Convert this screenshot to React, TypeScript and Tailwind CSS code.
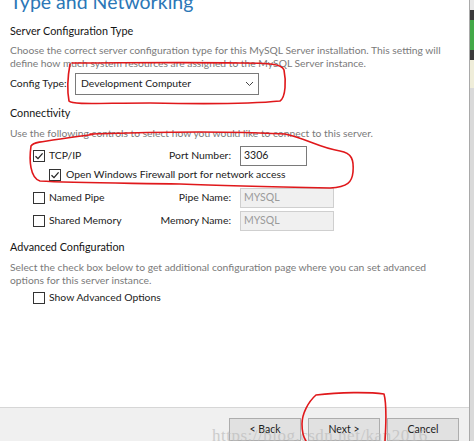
import React from "react";

const font = { fontFamily: 'Lato, "Noto Sans", Arial, sans-serif' };

function CheckBox({ checked }: { checked?: boolean }) {
  return (
    <div className="w-[12px] h-[12px] border border-[#333] bg-white flex items-center justify-center shrink-0">
      {checked && (
        <svg width="10" height="10" viewBox="0 0 10 10">
          <path d="M1.5 5.2 L4 7.6 L8.6 2.4" fill="none" stroke="#222" strokeWidth="1.3" />
        </svg>
      )}
    </div>
  );
}

function TextBox({ value, disabled, width }: { value: string; disabled?: boolean; width: string }) {
  return (
    <div
      className={
        "h-[20px] flex items-center px-[3px] text-[10.5px] border " +
        width +
        (disabled ? " bg-[#f0f0f0] border-[#cfcfcf] text-[#9a9a9a]" : " bg-white border-[#7a7a7a] text-[#222]")
      }
    >
      {value}
    </div>
  );
}

function Row({ label, checked, fieldLabel, value, disabled, width }: any) {
  return (
    <div className="h-[20px] flex items-center pl-[23px]">
      <div className="w-[117px] flex items-center gap-[4px]">
        <CheckBox checked={checked} />
        <span className="text-[10.4px] text-[#222]">{label}</span>
      </div>
      <div className="w-[81px] text-right text-[10.4px] text-[#222]">{fieldLabel}</div>
      <div className="ml-[9px]">
        <TextBox value={value} disabled={disabled} width={width} />
      </div>
    </div>
  );
}

function Button({ label }: { label: string }) {
  return (
    <div className="w-[72px] h-[23px] border border-[#adadad] bg-[#e1e1e1] flex items-center justify-center text-[10.5px] text-[#222]">
      {label}
    </div>
  );
}

export default function App() {
  return (
    <div className="relative w-[474px] h-[441px] overflow-hidden flex bg-white whitespace-nowrap" style={font}>
      <div className="w-[469px] h-full flex flex-col">
        <div className="flex-1 flex flex-col px-[10px]">
          <div className="h-[23px] relative">
            <div className="absolute left-0 top-[-10px] text-[19.5px] leading-[24px] text-[#2b77b7]">
              Type and Networking
            </div>
          </div>
          <div className="h-[16px] flex items-center text-[10.8px] text-[#141414]">
            Server Configuration Type
          </div>
          <div className="mt-[5px] text-[10.3px] leading-[12.5px] text-[#7a7a7a]">
            Choose the correct server configuration type for this MySQL Server installation. This setting will
            <br />
            define how much system resources are assigned to the MySQL Server instance.
          </div>
          <div className="mt-[4px] h-[22px] flex items-center">
            <span className="w-[65px] text-[10.4px] text-[#222]">Config Type:</span>
            <div className="w-[184px] h-[22px] border border-[#7a7a7a] bg-white flex items-center justify-between pl-[5px] pr-[4px]">
              <span className="text-[10.4px] text-[#222]">Development Computer</span>
              <svg width="9" height="6" viewBox="0 0 9 6">
                <path d="M1 1 L4.5 4.5 L8 1" fill="none" stroke="#444" strokeWidth="1" />
              </svg>
            </div>
          </div>
          <div className="mt-[10px] h-[16px] flex items-center text-[10.8px] text-[#141414]">
            Connectivity
          </div>
          <div className="mt-[6px] h-[13px] flex items-center text-[10.3px] text-[#7a7a7a]">
            Use the following controls to select how you would like to connect to this server.
          </div>
          <div className="mt-[6px]">
            <Row label="TCP/IP" checked fieldLabel="Port Number:" value="3306" width="w-[67px]" />
          </div>
          <div className="mt-[1px] h-[16px] flex items-center pl-[39px] gap-[5px]">
            <CheckBox checked />
            <span className="text-[10.4px] text-[#222]">Open Windows Firewall port for network access</span>
          </div>
          <div className="mt-[5px]">
            <Row label="Named Pipe" fieldLabel="Pipe Name:" value="MYSQL" disabled width="w-[94px]" />
          </div>
          <div className="mt-[3px]">
            <Row label="Shared Memory" fieldLabel="Memory Name:" value="MYSQL" disabled width="w-[94px]" />
          </div>
          <div className="mt-[8px] h-[16px] flex items-center text-[10.8px] text-[#141414]">
            Advanced Configuration
          </div>
          <div className="mt-[6px] text-[10.3px] leading-[13px] text-[#7a7a7a]">
            Select the check box below to get additional configuration page where you can set advanced
            <br />
            options for this server instance.
          </div>
          <div className="mt-[3px] h-[16px] flex items-center pl-[23px] gap-[4px]">
            <CheckBox />
            <span className="text-[10.4px] text-[#222]">Show Advanced Options</span>
          </div>
        </div>
        <div className="h-[34px] border-t border-[#d6d6d6] bg-[#f0f0f0] flex justify-end items-start pt-[10px] pr-[10px] gap-[7px]">
          <Button label="< Back" />
          <Button label="Next >" />
          <Button label="Cancel" />
        </div>
      </div>
      <div className="w-[1px] h-full bg-[#a9a9a9]" />
      <div className="flex-1 h-full flex flex-col bg-[#d9d9d9]">
        <div className="h-[10px] bg-[#e8e8e8]" />
        <div className="h-[50px] bg-[#3b3b3b] flex flex-col">
          <div className="h-[10px]" />
          <div className="h-[30px] bg-[#43a948]" />
        </div>
        <div className="h-[28px] bg-[#efedd9]" />
      </div>

      <div
        className="absolute left-[212px] top-[423px] text-[17px] tracking-[0.5px] text-[#bdbdbd] opacity-70 pointer-events-none"
        style={{ fontFamily: '"Liberation Serif", "DejaVu Serif", serif' }}
      >
        https://blog.csdn.net/kan2016
      </div>

      <svg className="absolute left-0 top-0 pointer-events-none" width="474" height="441" viewBox="0 0 474 441">
        <g fill="none" stroke="#e0181b" strokeWidth="1.6" strokeLinecap="round" strokeLinejoin="round">
          <path d="M70 64 C 68 75, 67 90, 69 101 C 72 105, 100 103, 150 103 C 200 104, 250 104, 280 101 C 286 97, 286 80, 284 70 C 282 64, 270 63, 240 63 C 180 62, 120 63, 72 63" />
          <path d="M90 134 C 150 132, 230 131, 285 134 C 305 138, 320 148, 340 151 C 352 153, 354 160, 353 172 C 352 182, 348 187, 330 188 C 280 187, 230 186, 180 184 C 120 183, 70 183, 40 181 C 30 178, 29 160, 31 146 C 34 141, 50 141, 95 134" />
          <path d="M316 395 C 340 392, 370 392, 384 394 C 387 405, 386 425, 385 441 M316 395 C 308 402, 302 414, 302 424 C 302 432, 304 438, 306 441" />
        </g>
      </svg>
    </div>
  );
}
